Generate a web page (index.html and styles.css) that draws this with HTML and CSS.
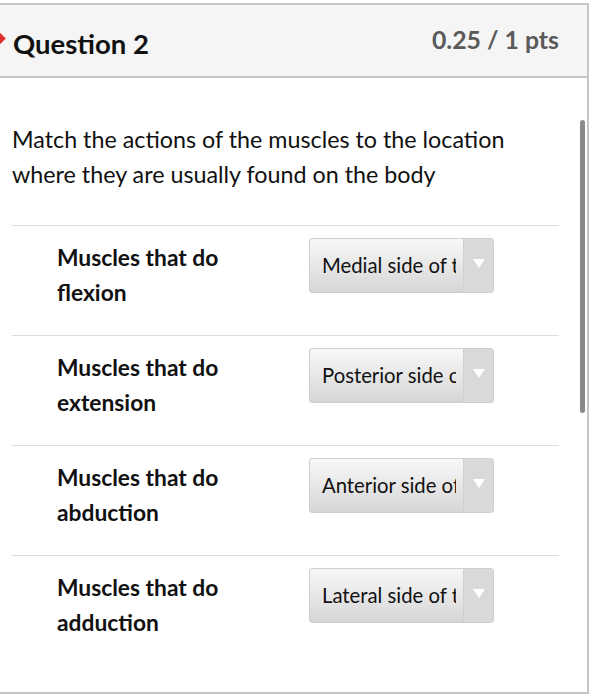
FILE: index.html
```html
<!DOCTYPE html>
<html lang="en">
<head>
    <meta charset="UTF-8">
    <meta name="viewport" content="width=device-width, initial-scale=1.0">
    <title>Question 2</title>
    <link rel="stylesheet" href="styles.css">
</head>
<body>
<main class="quiz">
    <section class="question">
        <span class="marker"></span>
        <header class="question-header">
            <h2 class="question-title">Question 2</h2>
            <span class="points">0.25 / 1 pts</span>
        </header>
        <div class="question-body">
            <p class="prompt">Match the actions of the muscles to the location where they are usually found on the body</p>
            <div class="matches">
                <div class="match">
                    <label class="match-label" for="m1">Muscles that do flexion</label>
                    <div class="select" id="m1">
                        <span class="select-text">Medial side of the body</span>
                        <span class="select-arrow"></span>
                    </div>
                </div>
                <div class="match">
                    <label class="match-label" for="m2">Muscles that do extension</label>
                    <div class="select" id="m2">
                        <span class="select-text">Posterior side of the body</span>
                        <span class="select-arrow"></span>
                    </div>
                </div>
                <div class="match">
                    <label class="match-label" for="m3">Muscles that do abduction</label>
                    <div class="select" id="m3">
                        <span class="select-text">Anterior side of the body</span>
                        <span class="select-arrow"></span>
                    </div>
                </div>
                <div class="match">
                    <label class="match-label" for="m4">Muscles that do adduction</label>
                    <div class="select" id="m4">
                        <span class="select-text">Lateral side of the body</span>
                        <span class="select-arrow"></span>
                    </div>
                </div>
            </div>
        </div>
    </section>
    <div class="scrollbar"></div>
</main>
</body>
</html>
```

FILE: styles.css
```css
*, *::before, *::after{
    box-sizing: border-box;
    padding: 0;
    margin: 0;
}

body{
    background-color: #FFF;
    font-family: Lato, 'Open Sans', sans-serif;
    color: #111;
    overflow: hidden;
}

.quiz{
    position: relative;
    width: 590px;
    height: 700px;
}

.question{
    position: relative;
    margin-top: 3px;
    width: 589px;
    border: 2px solid #c6c6c6;
    border-left: none;
}

.marker{
    position: absolute;
    left: -5px;
    top: 29px;
    width: 9px;
    height: 9px;
    background-color: #e0302c;
    transform: rotate(45deg);
}

.question-header{
    display: flex;
    justify-content: space-between;
    align-items: center;
    height: 73px;
    padding: 0 28px 0 13px;
    background-color: #f5f5f5;
    border-bottom: 2px solid #c6c6c6;
}

.question-title{
    font-size: 27.5px;
    font-weight: bold;
    color: #111;
    margin-top: 6px;
}

.points{
    font-size: 24.8px;
    font-weight: bold;
    color: #5a5a5a;
    margin-bottom: 2px;
}

.question-body{
    padding: 44px 28px 27px 12px;
}

.prompt{
    font-size: 23.3px;
    line-height: 35px;
    color: #111;
    margin-bottom: 33px;
    padding-right: 20px;
}

.match{
    display: grid;
    grid-template-columns: 252px 185px;
    align-items: start;
    height: 110px;
    padding: 12px 0 0 45px;
    border-top: 1px solid #dedede;
}

.match-label{
    font-size: 22.8px;
    font-weight: bold;
    line-height: 35px;
    margin-top: 2px;
    width: 200px;
}

.select{
    display: flex;
    height: 55px;
    border: 1px solid #cfcfcf;
    border-radius: 3px;
    background: linear-gradient(#f8f8f8, #d6d6d6);
    overflow: hidden;
}

.select-text{
    flex: 1;
    overflow: hidden;
    white-space: nowrap;
    font-size: 20.3px;
    line-height: 53px;
    padding-left: 12px;
    margin-right: 7px;
    color: #111;
}

.select-arrow{
    position: relative;
    width: 30px;
    background-color: #d9d9d9;
    border-left: 1px solid #d0d0d0;
}

.select-arrow::after{
    content: '';
    position: absolute;
    left: 50%;
    top: 20px;
    transform: translateX(-50%);
    border-left: 6px solid transparent;
    border-right: 6px solid transparent;
    border-top: 9px solid #FFF;
}

.scrollbar{
    position: absolute;
    left: 580px;
    top: 117px;
    width: 5px;
    height: 293px;
    border-radius: 3px;
    background-color: #8a8a8a;
}
```
